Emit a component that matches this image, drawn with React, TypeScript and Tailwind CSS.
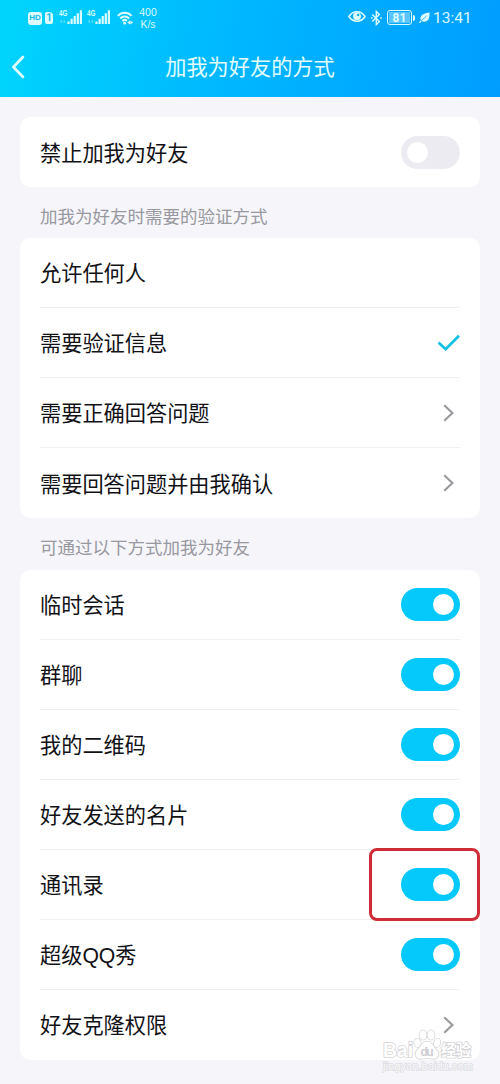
import type { ReactNode } from "react";
import clsx from "clsx";

type Control = "on" | "off" | "link" | "check" | "none";

interface Item {
  label: string;
  control: Control;
  highlight?: boolean;
}

const verifyItems: Item[] = [
  { label: "允许任何人", control: "none" },
  { label: "需要验证信息", control: "check" },
  { label: "需要正确回答问题", control: "link" },
  { label: "需要回答问题并由我确认", control: "link" },
];

const sourceItems: Item[] = [
  { label: "临时会话", control: "on" },
  { label: "群聊", control: "on" },
  { label: "我的二维码", control: "on" },
  { label: "好友发送的名片", control: "on" },
  { label: "通讯录", control: "on", highlight: true },
  { label: "超级QQ秀", control: "on" },
  { label: "好友克隆权限", control: "link" },
];

function Signal() {
  return (
    <svg width="24" height="16" viewBox="0 0 24 16" fill="currentColor">
      <text x="0" y="6.8" fontSize="8.5" fontWeight="700" textLength="8.5" lengthAdjust="spacingAndGlyphs">
        4G
      </text>
      <path d="M1.500 11h1.500v3h-1.500zM4.500 11h1.500v3h-1.500z" opacity=".35" />
      <path d="M8.400 12.500h2.200v2.500h-2.200zM11.500 9.800h2.200V15h-2.200zM14.600 7h2.200v8h-2.200zM17.700 4.200h2.200V15h-2.200zM20.800 1.200h2.200V15h-2.200z" />
    </svg>
  );
}

function StatusBar() {
  return (
    <div className="flex h-9 items-center pl-7 pr-[29px] text-[#dcfbff]">
      <div className="flex h-[13px] w-[14px] items-center justify-center rounded-[3px] bg-current">
        <span className="text-[8px] font-bold leading-none text-[#12bdf0]">HD</span>
      </div>
      <div className="ml-[3px] flex h-[12px] w-2 items-center justify-center rounded-[2px] rounded-tr-[4px] bg-current">
        <span className="font-[Roboto] text-[10px] font-bold leading-none text-[#12bdf0]">1</span>
      </div>
      <div className="ml-1.5 flex gap-1 pb-0.5">
        <Signal />
        <Signal />
      </div>
      <svg className="ml-1.5" width="17" height="14" viewBox="0 0 17 14" fill="none" stroke="currentColor" strokeWidth="1.9">
        <path d="M.8 4.8C4.6.7 10.8.7 14.6 4.8M3.2 7.5c2.6-2.7 6.4-2.7 9 0M5.4 10c1.4-1.400 3.200-1.400 4.600-.2" />
        <circle cx="7.6" cy="12" r="1.6" fill="currentColor" stroke="none" />
        <path d="m13 9.600-2.800 2 2.800 2zM13.300 9.600l2.800 2-2.800 2z" fill="currentColor" stroke="none" />
      </svg>
      <div className="ml-1 flex w-5 flex-col items-center text-[10.5px] leading-[12px]">
        <span>400</span>
        <span>K/s</span>
      </div>

      <svg className="mb-[3px] ml-auto" width="18" height="13" viewBox="0 0 18 13" fill="none" stroke="currentColor">
        <path d="M1 6.5C4.8.2 13.2.2 17 6.5c-3.8 6.3-12.2 6.3-16 0Z" strokeWidth="1.6" />
        <circle cx="9" cy="6.2" r="3.9" fill="currentColor" stroke="none" />
        <circle cx="10.2" cy="4.900" r="1.2" fill="#08a9f5" stroke="none" />
      </svg>
      <svg className="mb-px ml-[5px]" width="11" height="16" viewBox="0 0 11 16" fill="none" stroke="currentColor" strokeWidth="1.4">
        <path d="m1.3 4.5 7 7L5.3 14.6V1.4l3 3.1-7 7" />
        <path d="M0 8h1.6M9.2 8h1.6" strokeWidth="1.6" />
      </svg>
      <div className="mb-px ml-[5px] flex items-center">
        <div className="flex h-[15px] w-[25px] rounded-[3px] border border-current p-px">
          <div className="flex w-full items-center justify-center bg-white/35 font-[Roboto] text-[12px] font-bold leading-none">
            81
          </div>
        </div>
        <div className="ml-px h-1.5 w-[2px] rounded-r-sm bg-current" />
      </div>
      <svg className="mb-px ml-1" width="11" height="11" viewBox="0 0 11 11" fill="none">
        <path d="M10.6.5c.2 5.500-1.300 9.200-5.400 9.200C3 9.700 1.400 8.500 1.400 6.400 1.400 3 5 1.300 10.600.5Z" fill="currentColor" />
        <path d="M2 9.200 7.400 4" stroke="#08a5fa" strokeWidth=".8" />
        <path d="M.4 10.700 2.200 9" stroke="currentColor" strokeWidth="1.2" />
      </svg>
      <span className="ml-[3px] w-[38px] whitespace-nowrap pt-px font-[Roboto] text-[15.5px] leading-none">13:41</span>
    </div>
  );
}

function Header() {
  return (
    <header className="h-[97px] bg-linear-[100deg] from-[#00d5fc] via-[#00b8ff] via-45% to-[#009dff]">
      <StatusBar />
      <div className="flex h-[61px] items-center justify-between px-[11px] text-[#e2fcff]">
        <svg width="14" height="24" viewBox="0 0 14 24" fill="none" stroke="currentColor" strokeWidth="2.6">
          <path d="M12 2 2.4 12 12 22" strokeLinecap="round" strokeLinejoin="round" />
        </svg>
        <h1 className="pt-[3px] text-[21.2px] leading-none">加我为好友的方式</h1>
        <span className="w-[14px]" />
      </div>
    </header>
  );
}

function Toggle({ on }: { on: boolean }) {
  return (
    <div
      className={clsx(
        "flex h-[33px] w-[59px] items-center rounded-full",
        on ? "justify-end bg-[#05c8fb] pr-1.5" : "bg-[#ebebf1] pl-1.5",
      )}
    >
      <div className="size-[21px] rounded-full bg-white" />
    </div>
  );
}

function Accessory({ control }: { control: Control }) {
  if (control === "on" || control === "off") return <Toggle on={control === "on"} />;
  if (control === "link") {
    return (
      <svg className="mr-[5px]" width="13" height="20" viewBox="0 0 13 20" fill="none" stroke="#9a9a9f" strokeWidth="2.2">
        <path d="m2.2 2.3 8.200 7.700-8.200 7.700" />
      </svg>
    );
  }
  if (control === "check") {
    return (
      <svg width="23" height="18" viewBox="0 0 23 18" fill="none" stroke="#10bfe5" strokeWidth="2.7">
        <path d="m1.500 8.500 7.200 6.700L22 1.800" />
      </svg>
    );
  }
  return null;
}

function Card({ items }: { items: Item[] }) {
  return (
    <div className="rounded-[10px] bg-white px-5">
      {items.map((item, i) => (
        <div
          key={item.label}
          className={clsx(
            "relative flex h-[70px] items-center justify-between",
            i < items.length - 1 && "border-b border-[#f0f0f2]",
          )}
        >
          <span className="pt-[3px] text-[21.2px] leading-none text-[#111116]">{item.label}</span>
          <Accessory control={item.control} />
          {item.highlight && (
            <div className="absolute -right-5 -top-[2px] h-[73px] w-[111px] rounded-lg border-[3px] border-[#cf2c38]" />
          )}
        </div>
      ))}
    </div>
  );
}

function SectionTitle({ children }: { children: ReactNode }) {
  return <h2 className="flex h-[51px] items-center pl-5 pt-[11px] text-[17.5px] leading-none text-[#98989f]">{children}</h2>;
}

function Watermark() {
  return (
    <svg
      className="absolute left-[380px] top-[1026px]"
      width="98"
      height="50"
      viewBox="0 0 98 50"
      fill="#fff"
      stroke="#d3d3d6"
      strokeWidth="1.6"
      paintOrder="stroke"
    >
      <text x="3" y="31" fontSize="21" fontWeight="700" textLength="30" lengthAdjust="spacingAndGlyphs">
        Bai
      </text>
      <ellipse cx="37.5" cy="17" rx="3.2" ry="4.4" transform="rotate(-18 37.5 17)" />
      <ellipse cx="43" cy="9" rx="3.5" ry="4.8" />
      <ellipse cx="51" cy="9" rx="3.5" ry="4.8" />
      <ellipse cx="57" cy="17" rx="3.2" ry="4.4" transform="rotate(18 57 17)" />
      <path d="M47 15.500c5 0 6 5 9.500 8.300 4 4 1.400 9.700-3.500 9-4-.7-8-.7-12 0-5 .7-7.500-5-3.500-9 3.500-3.300 4.500-8.300 9.500-8.300Z" />
      <text x="40.500" y="30" fontSize="12" fontWeight="700" fill="#cdcdd1" stroke="none" textLength="13">
        du
      </text>
      <text x="61" y="30" fontSize="15.500" fontWeight="700" textLength="30" lengthAdjust="spacingAndGlyphs">
        经验
      </text>
      <text x="3" y="44" fontSize="10" fill="#f8f8fa" stroke="#dddde1" strokeWidth="1.300" textLength="90" lengthAdjust="spacingAndGlyphs">
        jingyan.baidu.com
      </text>
    </svg>
  );
}

export default function App() {
  return (
    <div className="relative h-[1084px] w-[500px] overflow-hidden bg-[#f5f5fa] font-['Liberation_Sans','Noto_Sans_CJK_SC',sans-serif]">
      <Header />
      <main className="px-5 pt-5">
        <Card items={[{ label: "禁止加我为好友", control: "off" }]} />
        <SectionTitle>加我为好友时需要的验证方式</SectionTitle>
        <Card items={verifyItems} />
        <div className="h-[51.5px]">
          <SectionTitle>可通过以下方式加我为好友</SectionTitle>
        </div>
        <Card items={sourceItems} />
      </main>
      <Watermark />
    </div>
  );
}
